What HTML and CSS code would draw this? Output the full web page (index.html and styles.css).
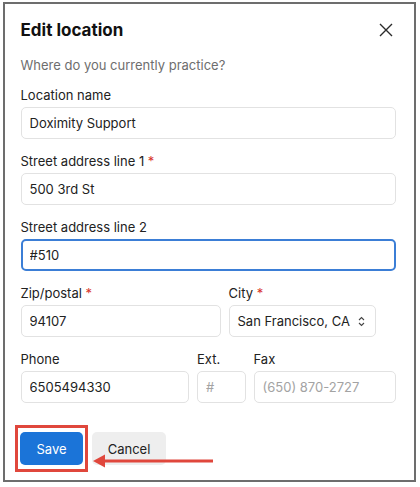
FILE: index.html
```html
<!DOCTYPE html>
<html lang="en">
<head>
<meta charset="utf-8">
<title>Edit location</title>
<link rel="stylesheet" href="styles.css">
</head>
<body>
<div class="frame">
  <div class="header">
    <h1 class="title">Edit location</h1>
    <button class="close" aria-label="Close">
      <svg width="14" height="14" viewBox="0 0 14 14"><path d="M1 1L13 13M13 1L1 13" stroke="#2b2b2b" stroke-width="1.4" fill="none"/></svg>
    </button>
  </div>
  <p class="sub">Where do you currently practice?</p>

  <div class="field">
    <label class="label">Location name</label>
    <input class="input" value="Doximity Support">
  </div>
  <div class="field">
    <label class="label">Street address line 1 <span class="req">*</span></label>
    <input class="input" value="500 3rd St">
  </div>
  <div class="field">
    <label class="label">Street address line 2</label>
    <input class="input focused" value="#510">
  </div>

  <div class="row row-zip">
    <div class="field">
      <label class="label">Zip/postal <span class="req">*</span></label>
      <input class="input" value="94107">
    </div>
    <div class="field">
      <label class="label">City <span class="req">*</span></label>
      <div class="input select">
        <span>San Francisco, CA</span>
        <svg width="7" height="11" viewBox="0 0 7 11"><path d="M1 4L3.5 1.5L6 4M1 7L3.5 9.5L6 7" stroke="#444" stroke-width="1.1" fill="none"/></svg>
      </div>
    </div>
  </div>

  <div class="row row-phone">
    <div class="field">
      <label class="label">Phone</label>
      <input class="input" value="6505494330">
    </div>
    <div class="field">
      <label class="label">Ext.</label>
      <input class="input" placeholder="#">
    </div>
    <div class="field">
      <label class="label">Fax</label>
      <input class="input" placeholder="(650) 870-2727">
    </div>
  </div>

  <div class="actions">
    <div class="highlight"><button class="btn save">Save</button></div>
    <button class="btn cancel">Cancel</button>
    <svg class="arrow" width="122" height="14" viewBox="0 0 122 14"><path d="M10 7H120" stroke="#e0473c" stroke-width="3"/><path d="M0 7L12 0.5V13.5Z" fill="#e0473c"/></svg>
  </div>
</div>
</body>
</html>
```
FILE: styles.css
```css
* { box-sizing: border-box; }
html, body { margin: 0; padding: 0; background: #fff; }
body { font-family: Inter, "Noto Sans", sans-serif; color: #222; }

.frame {
  margin: 2px 0 0 3px;
  width: 413px;
  height: 480px;
  border: 2px solid #6d6d6d;
  padding: 14px 18.5px 0 15.5px;
}

.header {
  display: flex;
  justify-content: space-between;
  align-items: center;
  height: 24px;
}
.title {
  margin: 0;
  font-size: 17px;
  line-height: 24px;
  font-weight: 700;
  color: #111;
}
.close {
  border: 0;
  background: none;
  padding: 0;
  margin-right: 3px;
  width: 14px;
  height: 14px;
  display: flex;
}

.sub {
  margin: 13px 0 11px;
  font-size: 13px;
  line-height: 20px;
  color: #6e6e6e;
}

.field {
  display: flex;
  flex-direction: column;
  margin-bottom: 13px;
}
.row .field { margin-bottom: 0; }
.label {
  font-size: 13px;
  line-height: 18px;
  margin-bottom: 3px;
  color: #222;
}
.req { color: #d8342a; }

.input {
  height: 32px;
  width: 100%;
  border: 1px solid #e2e2e2;
  border-radius: 5px;
  padding: 0 8px;
  font-family: inherit;
  font-size: 13px;
  color: #222;
  background: #fff;
  outline: none;
}
.input::placeholder { color: #a3a3a3; }
.input.focused {
  border: 2px solid #3b7ed6;
  padding: 0 7px;
}
.select {
  display: flex;
  align-items: center;
  justify-content: space-between;
  padding-right: 10px;
}

.row { display: grid; column-gap: 8px; }
.row-zip { grid-template-columns: 200px 147px; margin-bottom: 13px; }
.row-phone { grid-template-columns: 168.5px 48.5px 1fr; }

.actions {
  position: relative;
  display: flex;
  align-items: center;
  margin-top: 22px;
}
.highlight {
  margin-left: -5.5px;
  border: 3px solid #e0473c;
  padding: 4px 2px;
  display: flex;
}
.btn {
  height: 33px;
  border: 0;
  border-radius: 5px;
  font-family: inherit;
  font-size: 13px;
  padding: 0;
}
.save {
  width: 63px;
  background: #1b74d8;
  color: #fff;
}
.cancel {
  width: 74px;
  margin-left: 4px;
  background: #eeeeee;
  color: #222;
}
.arrow {
  position: absolute;
  left: 72px;
  top: 29px;
}
```
